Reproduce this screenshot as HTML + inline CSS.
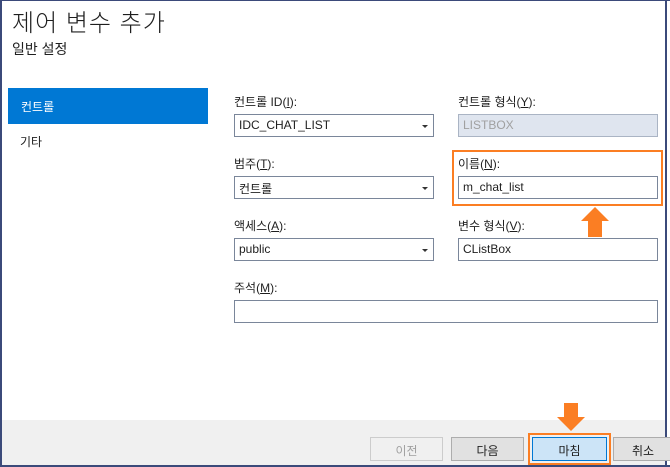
<!DOCTYPE html>
<html><head><meta charset="utf-8"><style>
*{box-sizing:border-box;margin:0;padding:0}
body{width:670px;height:467px;background:#fff;font-family:"Segoe UI","Liberation Sans","Noto Sans CJK KR",sans-serif;font-size:12px;color:#1e1e1e;position:relative;overflow:hidden}
.a{position:absolute}
.lbl{position:absolute;font-size:12px;color:#1e1e1e}
.inp{position:absolute;height:23px;border:1px solid #7a869a;background:#fff;padding:3px 0 0 4px;font-size:12px}
.dd::after{content:"";position:absolute;right:5px;top:10px;border-left:3px solid transparent;border-right:3px solid transparent;border-top:3px solid #333}
.btn{position:absolute;top:437px;height:24px;border:1px solid #adadad;background:#e1e1e1;text-align:center;padding-top:4px;font-size:12px}
u{text-decoration:underline}
</style></head><body>
<div class="a" style="left:0;top:0;width:2px;height:467px;background:#3b4a7a"></div>
<div class="a" style="left:0;top:0;width:670px;height:1px;background:#3b4a7a"></div>
<div class="a" style="left:665px;top:0;width:2px;height:467px;background:#3b4a7a"></div>
<div class="a" style="left:12px;top:3px;font-size:24px;color:#1e1e1e;font-weight:300;letter-spacing:1px">제어 변수 추가</div>
<div class="a" style="left:12px;top:39px;font-size:14px">일반 설정</div>
<div class="a" style="left:8px;top:88px;width:200px;height:36px;background:#0078d4;color:#fff;padding:10px 0 0 13px">컨트롤</div>
<div class="a" style="left:20px;top:133px">기타</div>

<div class="lbl" style="left:234px;top:93px">컨트롤 ID(<u>I</u>):</div>
<div class="inp dd" style="left:234px;top:114px;width:200px">IDC_CHAT_LIST</div>
<div class="lbl" style="left:458px;top:93px">컨트롤 형식(<u>Y</u>):</div>
<div class="inp" style="left:458px;top:114px;width:200px;background:#dfe5ef;border-color:#aab4c4;color:#a0a0a0">LISTBOX</div>

<div class="lbl" style="left:234px;top:155px">범주(<u>T</u>):</div>
<div class="inp dd" style="left:234px;top:176px;width:200px">컨트롤</div>
<div class="a" style="left:452px;top:150px;width:211px;height:56px;border:2px solid #fb7e23"></div>
<div class="lbl" style="left:458px;top:155px">이름(<u>N</u>):</div>
<div class="inp" style="left:458px;top:176px;width:200px">m_chat_list</div>
<svg class="a" style="left:580px;top:206px" width="30" height="32"><polygon points="15,1 29,15 22,15 22,31 8,31 8,15 1,15" fill="#fb7e23"/></svg>

<div class="lbl" style="left:234px;top:217px">액세스(<u>A</u>):</div>
<div class="inp dd" style="left:234px;top:238px;width:200px">public</div>
<div class="lbl" style="left:458px;top:217px">변수 형식(<u>V</u>):</div>
<div class="inp" style="left:458px;top:238px;width:200px">CListBox</div>

<div class="lbl" style="left:234px;top:279px">주석(<u>M</u>):</div>
<div class="inp" style="left:234px;top:300px;width:424px"></div>

<div class="a" style="left:2px;top:420px;width:663px;height:45px;background:#f0f0f0"></div>
<div class="a" style="left:0;top:465px;width:670px;height:2px;background:#3b4a7a"></div>
<svg class="a" style="left:556px;top:402px" width="30" height="30"><polygon points="8,1 22,1 22,15 29,15 15,29 1,15 8,15" fill="#fb7e23"/></svg>
<div class="btn" style="left:370px;width:73px;background:#f0f0f0;border-color:#ccc;color:#a0a0a0">이전</div>
<div class="btn" style="left:451px;width:73px">다음</div>
<div class="a" style="left:528px;top:433px;width:83px;height:32px;border:2px solid #fb7e23"></div>
<div class="btn" style="left:532px;width:75px;background:#cce4f7;border-color:#0078d4">마침</div>
<div class="btn" style="left:613px;width:60px">취소</div>
</body></html>
